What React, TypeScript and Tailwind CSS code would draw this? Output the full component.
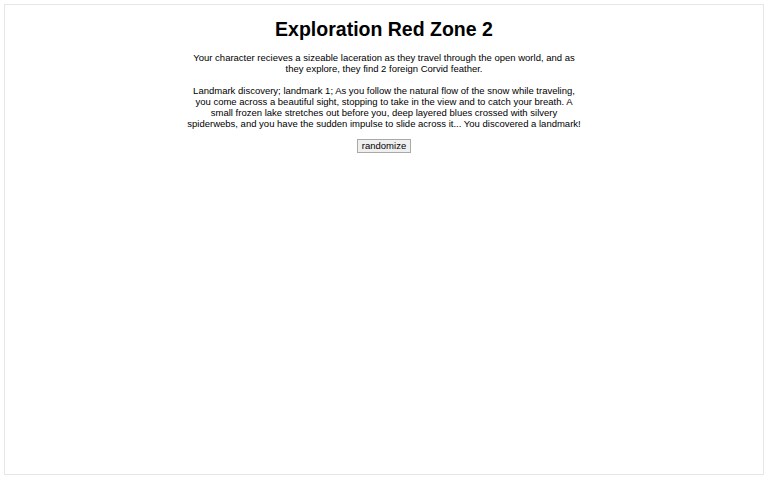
export default function App() {
  return (
    <div className="h-[480px] w-[768px] bg-white p-1 font-['Liberation_Sans',Arial,sans-serif] text-black">
      <div className="flex h-[471px] flex-col items-center border border-[#e6e6e6]">
        {/* Zone heading */}
        <h1 className="mt-[11px] text-[19.5px] font-bold leading-[26px]">Exploration Red Zone 2</h1>

        <div className="mt-[10px] w-[396px] text-center text-[9.5px] leading-[11px]">
          <p>
            Your character recieves a sizeable laceration as they travel through the open world, and as
            they explore, they find 2 foreign Corvid feather.
          </p>
          <p className="mt-[11px]">
            Landmark discovery; landmark 1; As you follow the natural flow of the snow while traveling,
            you come across a beautiful sight, stopping to take in the view and to catch your breath. A
            small frozen lake stretches out before you, deep layered blues crossed with silvery
            spiderwebs, and you have the sudden impulse to slide across it... You discovered a landmark!
          </p>
        </div>

        <button className="mt-[10px] h-[14px] border border-[#a9a9a9] bg-[#efefef] px-[4px] text-[9.5px] leading-[12px]">
          randomize
        </button>
      </div>
    </div>
  );
}
